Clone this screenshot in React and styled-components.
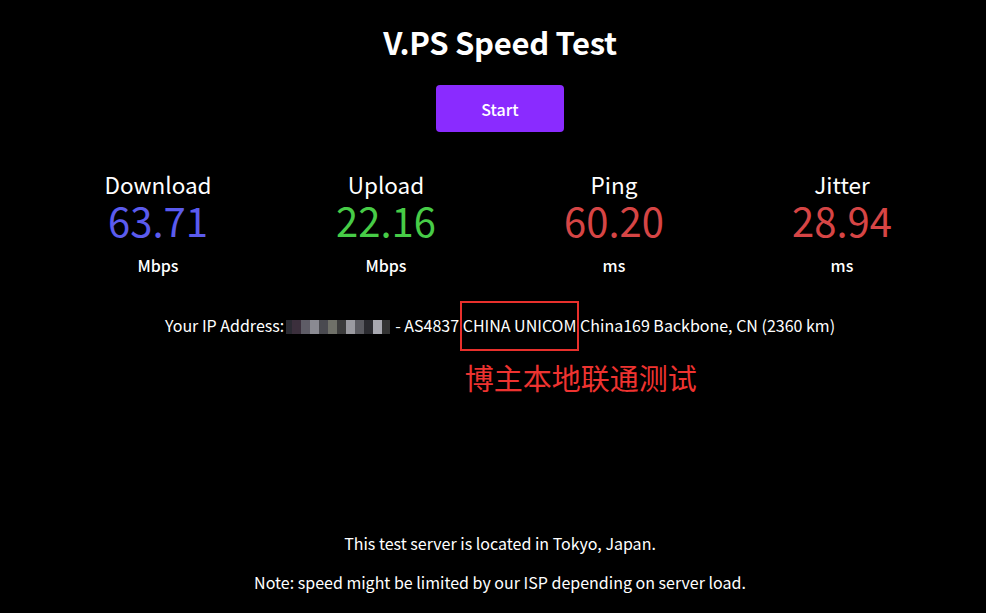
import React from "react";
import styled, { createGlobalStyle } from "styled-components";

const GlobalStyle = createGlobalStyle`
  html, body {
    margin: 0;
    background: #000;
  }
  body {
    font-family: "Noto Sans CJK SC", "Noto Sans", sans-serif;
    color: #fff;
  }
`;

const Page = styled.main`
  display: flex;
  flex-direction: column;
  align-items: center;
  min-height: 613px;
  padding-left: 14px;
  box-sizing: border-box;
`;

const Title = styled.h1`
  margin: 22px 0 0;
  font-size: 31px;
  line-height: 40px;
  font-weight: 700;
  letter-spacing: -0.3px;
`;

const StartButton = styled.button`
  margin-top: 23px;
  width: 128px;
  height: 47px;
  border: none;
  border-radius: 4px;
  background: #8a2bff;
  color: #fff;
  font-family: inherit;
  font-size: 16px;
  font-weight: 500;
  cursor: pointer;
`;

const Stats = styled.section`
  display: grid;
  grid-template-columns: repeat(4, 228px);
  margin-top: 38px;
`;

const Stat = styled.div`
  display: flex;
  flex-direction: column;
  align-items: center;
`;

const Label = styled.div`
  font-size: 22.5px;
  line-height: 28px;
`;

const Value = styled.div`
  color: ${({ color }) => color};
  font-size: 40px;
  line-height: 44px;
  font-weight: 400;
`;

const Unit = styled.div`
  margin-top: 11px;
  font-size: 16px;
  line-height: 24px;
  font-weight: 500;
`;

const IpLine = styled.p`
  margin: 36px 0 0;
  font-size: 16px;
  line-height: 24px;
  white-space: nowrap;
`;

const Masked = styled.span`
  display: inline-flex;
  vertical-align: -2px;
  margin: 0 5px 0 2px;
`;

const Pixel = styled.span`
  width: ${({ w }) => w || 9}px;
  height: 14px;
  background: ${({ c }) => c};
`;

const Marked = styled.span`
  position: relative;

  &::after {
    content: "";
    position: absolute;
    top: -12px;
    bottom: -14px;
    left: -3px;
    right: -3px;
    border: 2px solid #e8302c;
  }
`;

const Note = styled.span`
  position: absolute;
  left: 2px;
  top: 46px;
  color: #ee3330;
  font-size: 29px;
  line-height: 36px;
  white-space: nowrap;
`;

const Footer = styled.footer`
  margin-top: auto;
  padding-bottom: 19px;
  display: flex;
  flex-direction: column;
  align-items: center;
  gap: 15px;
  font-size: 16px;
  line-height: 24px;
`;

const stats = [
  { label: "Download", value: "63.71", unit: "Mbps", color: "#5b5bee" },
  { label: "Upload", value: "22.16", unit: "Mbps", color: "#47cc47" },
  { label: "Ping", value: "60.20", unit: "ms", color: "#d64545" },
  { label: "Jitter", value: "28.94", unit: "ms", color: "#d64545" },
];

const pixels = [
  { c: "#2a2a32", w: 6 },
  { c: "#3b2f3c" },
  { c: "#5e5c66" },
  { c: "#8a8a92" },
  { c: "#4a4a50" },
  { c: "#6f7068" },
  { c: "#3c3c3c" },
  { c: "#9a9aa0" },
  { c: "#5a5a60" },
  { c: "#2b2b30" },
  { c: "#a8a8b0" },
  { c: "#333", w: 8 },
];

export default function App() {
  return (
    <>
      <GlobalStyle />
      <Page>
        <Title>V.PS Speed Test</Title>
        <StartButton>Start</StartButton>
        <Stats>
          {stats.map(s => (
            <Stat key={s.label}>
              <Label>{s.label}</Label>
              <Value color={s.color}>{s.value}</Value>
              <Unit>{s.unit}</Unit>
            </Stat>
          ))}
        </Stats>
        <IpLine>
          Your IP Address:
          <Masked>
            {pixels.map((p, i) => (
              <Pixel key={i} c={p.c} w={p.w} />
            ))}
          </Masked>
          - AS4837{" "}
          <Marked>
            CHINA UNICOM
            <Note>博主本地联通测试</Note>
          </Marked>{" "}
          China169 Backbone, CN (2360 km)
        </IpLine>
        <Footer>
          <div>This test server is located in Tokyo, Japan.</div>
          <div>Note: speed might be limited by our ISP depending on server load.</div>
        </Footer>
      </Page>
    </>
  );
}
